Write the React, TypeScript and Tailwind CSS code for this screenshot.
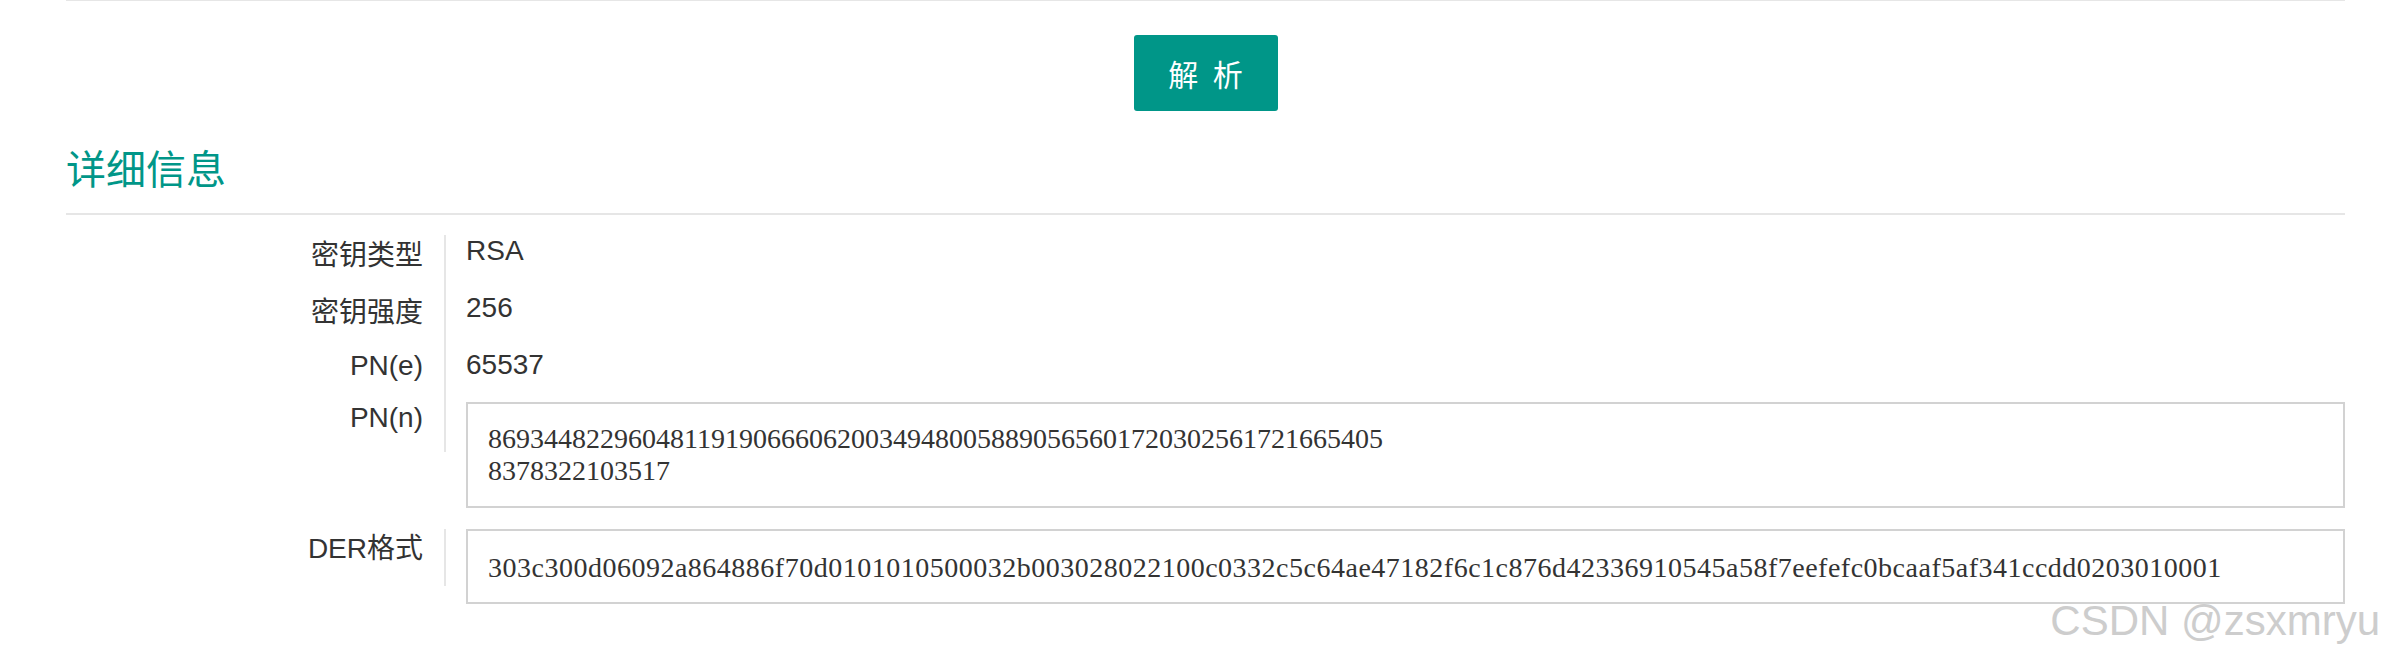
import type { ReactNode } from 'react';

interface RowProps {
  label: string;
  rowClass?: string;
  labelClass: string;
  children: ReactNode;
}

function Row({ label, rowClass = '', labelClass, children }: RowProps) {
  return (
    <div className={`flex ${rowClass}`}>
      <div
        className={`w-[380px] shrink-0 border-r-2 border-[#e6e6e6] pr-[21px] text-right text-[28px] leading-[31px] text-[#333] ${labelClass}`}
      >
        {label}
      </div>
      <div className="min-w-0 flex-1 pl-[20px]">{children}</div>
    </div>
  );
}

export default function App() {
  return (
    <div className="relative h-[658px] w-full overflow-hidden bg-white font-['Liberation_Sans','Noto_Sans_CJK_SC',sans-serif]">
      <div className="pl-[66px] pr-[43px]">
        {/* top rule */}
        <div className="h-px bg-[#e6e6e6]" />

        {/* parse button */}
        <div className="mt-[34px] flex justify-center">
          <button className="flex h-[76px] w-[144px] items-center justify-center rounded-[3px] bg-[#009688] pl-[4px] font-['Noto_Sans_CJK_SC',sans-serif] text-[30px] tracking-[4px] text-white">
            解 析
          </button>
        </div>

        {/* section title */}
        <h2 className="mt-[35px] border-b-2 border-[#e6e6e6] pb-[19px] text-[40px] leading-[48px] text-[#009688]">
          详细信息
        </h2>

        {/* details */}
        <div className="mt-[20px]">
          <Row label="密钥类型" rowClass="h-[57px]" labelClass="pt-[5px]">
            <div className="text-[28px] leading-[31px] text-[#333]">RSA</div>
          </Row>
          <Row label="密钥强度" rowClass="h-[57px]" labelClass="pt-[5px]">
            <div className="text-[28px] leading-[31px] text-[#333]">256</div>
          </Row>
          <Row label="PN(e)" rowClass="h-[53px]" labelClass="pt-[1px]">
            <div className="text-[28px] leading-[31px] text-[#333]">65537</div>
          </Row>
          <Row label="PN(n)" rowClass="items-start" labelClass="h-[50px]">
            <div className="h-[106px] border-2 border-[#d2d2d2] pl-[20px] pt-[19px] font-['Liberation_Serif',serif] text-[28px] leading-[32px] text-[#333]">
              <div>8693448229604811919066606200349480058890565601720302561721665405</div>
              <div>8378322103517</div>
            </div>
          </Row>
          <Row label="DER格式" rowClass="mt-[21px] items-start" labelClass="h-[57px] pt-[4px]">
            <div className="h-[75px] border-2 border-[#d2d2d2] pl-[20px] pt-[21px] font-['Liberation_Serif',serif] text-[28px] leading-[31px] tracking-[0.5px] whitespace-nowrap text-[#333]">
              303c300d06092a864886f70d0101010500032b003028022100c0332c5c64ae47182f6c1c876d42336910545a58f7eefefc0bcaaf5af341ccdd0203010001
            </div>
          </Row>
        </div>
      </div>

      {/* watermark */}
      <div className="absolute right-[8px] top-[596px] text-[42px] leading-[50px] text-[#cdcdcd] [text-shadow:0_0_1px_#ffffff]">
        CSDN @zsxmryu
      </div>
    </div>
  );
}
